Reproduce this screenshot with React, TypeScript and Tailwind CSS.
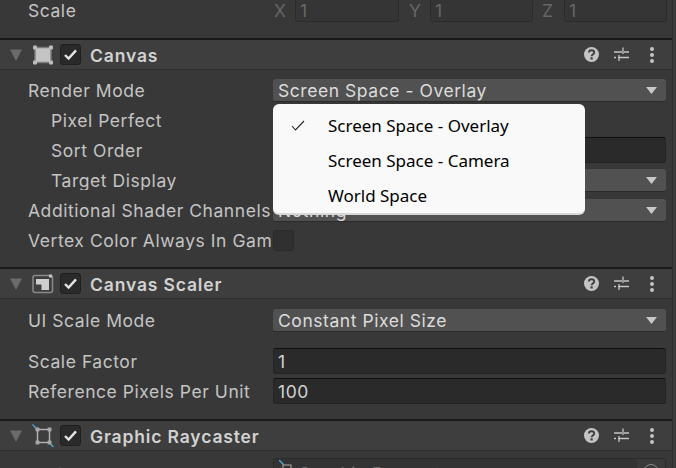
import type { ReactNode } from "react";

const Fold = () => (
  <svg width="14" height="14" viewBox="0 0 14 14" className="shrink-0">
    <path d="M1 1.5h12L7 13z" fill="#6a6a6a" />
  </svg>
);

const Toggle = ({ checked = true }: { checked?: boolean }) => (
  <div className="flex h-[21px] w-[21px] shrink-0 items-center justify-center rounded-[3px] border border-[#1f1f1f] bg-[#2a2a2a]">
    {checked && (
      <svg width="15" height="13" viewBox="0 0 15 13">
        <path d="M2 7l3.6 3.6L13 2.4" fill="none" stroke="#e4e4e4" strokeWidth="2.4" />
      </svg>
    )}
  </div>
);

const CanvasIcon = () => (
  <svg width="22" height="20" viewBox="0 0 22 20" className="shrink-0">
    <rect x="3" y="2.5" width="16" height="15" fill="#c4c4c4" stroke="#7c7c7c" strokeWidth="1.5" />
    <rect x="1" y="0.5" width="4" height="4" rx="1" fill="#bdbdbd" />
    <rect x="17" y="0.5" width="4" height="4" rx="1" fill="#bdbdbd" />
    <rect x="1" y="15.5" width="4" height="4" rx="1" fill="#bdbdbd" />
    <rect x="17" y="15.5" width="4" height="4" rx="1" fill="#bdbdbd" />
  </svg>
);

const ScalerIcon = () => (
  <svg width="22" height="20" viewBox="0 0 22 20" className="shrink-0">
    <rect x="1" y="1.5" width="19.5" height="17" rx="2" fill="none" stroke="#8a8a8a" strokeWidth="1.5" />
    <path d="M4 5h13v11H9.5v-5.5H4z" fill="#cfcfcf" />
    <rect x="17" y="0.5" width="3" height="3" fill="#c4c4c4" />
  </svg>
);

const RaycasterIcon = () => (
  <svg width="22" height="24" viewBox="0 0 22 24" className="shrink-0">
    <path d="M0.5 0.5l4.5 4.5M17 18.5l4.5 4.5" stroke="#4fa8d8" strokeWidth="1.4" />
    <rect x="5.5" y="5.5" width="12" height="13" fill="none" stroke="#b5b5b5" strokeWidth="1.4" />
    <rect x="3.5" y="3.5" width="4" height="4" rx="1" fill="#a8a8a8" />
    <rect x="15.5" y="3.5" width="4" height="4" rx="1" fill="#a8a8a8" />
    <rect x="3.5" y="16.5" width="4" height="4" rx="1" fill="#a8a8a8" />
    <rect x="15.5" y="16.5" width="4" height="4" rx="1" fill="#a8a8a8" />
  </svg>
);

const HeaderTools = () => (
  <div className="ml-auto flex items-center">
    <svg width="15" height="15" viewBox="0 0 15 15">
      <circle cx="7.5" cy="7.5" r="7.5" fill="#c4c4c4" />
      <path d="M4.9 5.6c0-3.2 5.3-3.2 5.3 0 0 2-2.6 1.9-2.6 3.6" fill="none" stroke="#3e3e3e" strokeWidth="1.9" />
      <rect x="6.5" y="10.3" width="2.2" height="2.2" fill="#3e3e3e" />
    </svg>
    <svg width="15" height="15" viewBox="0 0 15 15" className="ml-[15px]">
      <path d="M0 5h8M10 5h5M9 0.5v6.5M0 10.5h2M4 10.5h11M5 8v6" stroke="#c4c4c4" strokeWidth="1.3" fill="none" />
    </svg>
    <svg width="6" height="16" viewBox="0 0 6 16" className="ml-[20px]">
      <circle cx="3" cy="2" r="2" fill="#c4c4c4" />
      <circle cx="3" cy="8" r="2" fill="#c4c4c4" />
      <circle cx="3" cy="14" r="2" fill="#c4c4c4" />
    </svg>
  </div>
);

const Header = ({ icon, title }: { icon: ReactNode; title: string }) => (
  <div className="shrink-0">
    <div className="h-[2px] bg-[#1a1a1a]" />
    <div className="flex h-[30px] items-center border-b border-[#2f2f2f] bg-[#3e3e3e] pr-[17px] pl-[9px]">
      <Fold />
      <div className="ml-[9px] flex w-[28px] items-center">{icon}</div>
      <Toggle />
      <span className="ml-[9px] pt-[2px] text-[17.5px] font-semibold tracking-[0.85px] text-[#d2d2d2]">{title}</span>
      <HeaderTools />
    </div>
  </div>
);

const Row = ({ label, indent, children }: { label?: string; indent?: boolean; children?: ReactNode }) => (
  <div className="flex h-[30px] shrink-0 items-center">
    <div className={`w-[271px] shrink-0 overflow-hidden pt-[2px] whitespace-nowrap ${indent ? "pl-[51px]" : "pl-[28px]"}`}>{label}</div>
    <div className="ml-[2px] flex min-w-0 flex-1 items-center pr-[6px]">{children}</div>
  </div>
);

const Dropdown = ({ value }: { value?: string }) => (
  <div className="flex h-[23px] w-full items-center rounded-[3px] border-b border-[#2a2a2a] bg-[#515151] pt-[2px] pr-[8px] pl-[5px] whitespace-nowrap text-[#dcdcdc]">
    {value}
    <svg width="12" height="8" viewBox="0 0 12 8" className="ml-auto">
      <path d="M0 0h11L5.5 7z" fill="#c8c8c8" />
    </svg>
  </div>
);

const Input = ({ value }: { value?: string }) => (
  <div className="flex h-[26px] w-full items-center rounded-[3px] border border-[#242424] border-t-[#101010] bg-[#2a2a2a] px-[4px] pt-[2px] text-[#d2d2d2]">
    {value}
  </div>
);

const AxisField = ({ axis, w, gap }: { axis: string; w: string; gap: string }) => (
  <>
    <span className={`shrink-0 pt-[2px] text-[#666666] ${gap}`}>{axis}</span>
    <div className={`flex h-[24px] items-center rounded-[3px] border border-[#2b2b2b] bg-[#353535] px-[4px] pt-[2px] text-[#666666] ${w}`}>1</div>
  </>
);

const menuItems = ["Screen Space - Overlay", "Screen Space - Camera", "World Space"];

const App = () => {
  return (
    <div
      className="relative flex h-[468px] w-[676px] overflow-hidden bg-[#383838] text-[17.5px] leading-none tracking-[0.55px] text-[#c4c4c4]"
      style={{ fontFamily: "Inter, 'Liberation Sans', sans-serif" }}
    >
      <div className="flex w-[672px] shrink-0 flex-col">
        <div className="-mt-[5px] flex h-[30px] shrink-0 items-center">
          <div className="w-[274px] shrink-0 pt-[2px] pl-[28px]">Scale</div>
          <AxisField axis="X" w="w-[104px]" gap="w-[21px]" />
          <div className="w-[10px]" />
          <AxisField axis="Y" w="w-[103px]" gap="w-[21px]" />
          <div className="w-[9px]" />
          <AxisField axis="Z" w="w-[103px]" gap="w-[22px]" />
        </div>
        <div className="h-[13px] shrink-0" />

        <Header icon={<CanvasIcon />} title="Canvas" />
        <div className="h-[5px] shrink-0" />
        <Row label="Render Mode">
          <Dropdown value="Screen Space - Overlay" />
        </Row>
        <Row label="Pixel Perfect" indent />
        <Row label="Sort Order" indent>
          <Input />
        </Row>
        <Row label="Target Display" indent>
          <Dropdown />
        </Row>
        <Row label="Additional Shader Channels">
          <Dropdown value="Nothing" />
        </Row>
        <Row label="Vertex Color Always In Game">
          <div className="h-[21px] w-[21px] rounded-[3px] border border-[#2b2b2b] bg-[#303030]" />
        </Row>
        <div className="h-[12px] shrink-0" />

        <Header icon={<ScalerIcon />} title="Canvas Scaler" />
        <div className="h-[6px] shrink-0" />
        <Row label="UI Scale Mode">
          <Dropdown value="Constant Pixel Size" />
        </Row>
        <div className="h-[11px] shrink-0" />
        <Row label="Scale Factor">
          <Input value="1" />
        </Row>
        <Row label="Reference Pixels Per Unit">
          <Input value="100" />
        </Row>
        <div className="h-[13px] shrink-0" />

        <Header icon={<RaycasterIcon />} title="Graphic Raycaster" />
        <div className="flex pt-[7px]">
          <div className="w-[273px] shrink-0 pt-[8px] pl-[28px] text-[#6e6e6e]">Script</div>
          <div className="mr-[6px] flex h-[26px] flex-1 items-start overflow-hidden rounded-[3px] border border-[#2b2b2b] bg-[#333333] pl-[5px] text-[#6e6e6e]">
            <svg width="14" height="14" viewBox="0 0 14 14" className="mt-[1px] mr-[5px] shrink-0">
              <path d="M0 0l5 5" stroke="#4fa8d8" strokeWidth="1.4" />
              <rect x="4" y="5" width="8" height="8" fill="none" stroke="#8a8a8a" strokeWidth="1.4" />
            </svg>
            <span className="pt-[6px]">Graphic Raycaster</span>
            <div className="ml-auto flex h-full w-[28px] justify-center bg-[#3a3a3a] pt-[5px]">
              <div className="h-[16px] w-[16px] rounded-full border border-[#8a8a8a]" />
            </div>
          </div>
        </div>
      </div>
      <div className="w-[4px] shrink-0 border-l border-[#2e2e2e] bg-[#3c3c3c]" />

      <div
        className="absolute top-[104px] left-[273px] flex h-[111px] w-[312px] flex-col rounded-[6px] border-b-2 border-[#d8d8d8] bg-[#f9f9f9] pt-[4px] text-[17px] tracking-normal text-black"
        style={{ fontFamily: "'Noto Sans', 'Open Sans', sans-serif" }}
      >
        {menuItems.map((item, i) => (
          <div key={item} className="flex h-[35px] items-center">
            <div className="flex w-[55px] justify-start pl-[18px]">
              {i === 0 && (
                <svg width="14" height="11" viewBox="0 0 14 11">
                  <path d="M1 6l3.5 4L13 1" fill="none" stroke="#222222" strokeWidth="1.1" />
                </svg>
              )}
            </div>
            {item}
          </div>
        ))}
      </div>
    </div>
  );
};

export default App;
